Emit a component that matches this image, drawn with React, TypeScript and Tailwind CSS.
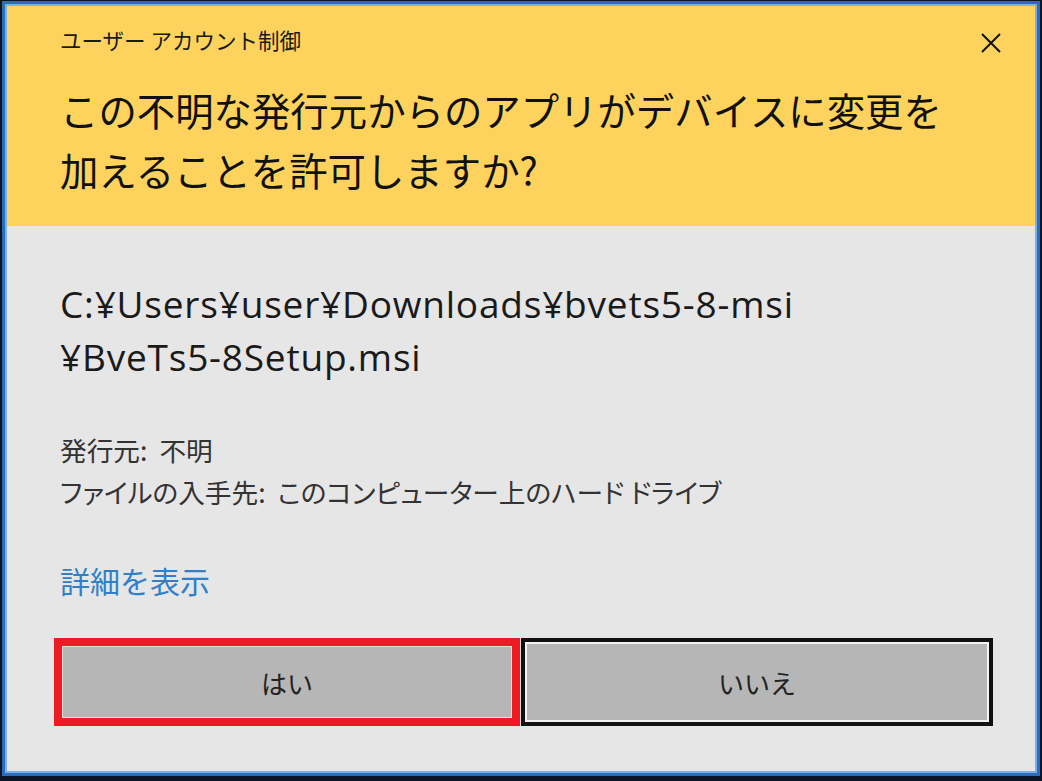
import React from "react";

const jp = "font-['Noto_Sans_CJK_JP','Noto_Sans',sans-serif]";

export default function App() {
  return (
    <div className="w-[1042px] h-[781px] bg-[#0a1528] pt-[1px] pl-[2px] pr-[2px] pb-[5px]">
      <div className="h-full w-full border-[3px] border-[#2a6dbd]">
        <div className="h-full w-full border-[2px] border-[#79b0e6] bg-[#e6e6e6] flex flex-col">
          {/* header */}
          <div className={`relative bg-[#fdd35d] h-[220px] pl-[53px] pt-[19px] ${jp}`}>
            <div className="text-[21.5px] leading-[30px] text-[#1a1a1a]">ユーザー アカウント制御</div>
            <div className="mt-[24px] text-[38.4px] leading-[60px] text-[#111]">
              <div>この不明な発行元からのアプリがデバイスに変更を</div>
              <div>加えることを許可しますか?</div>
            </div>
            <div className="absolute right-[33px] top-[26px] w-[22px] h-[22px]">
              <svg viewBox="0 0 22 22" width="22" height="22">
                <path d="M2 2 L20 20 M20 2 L2 20" stroke="#111" strokeWidth="2" fill="none" />
              </svg>
            </div>
          </div>
          {/* body */}
          <div className="pl-[53px] pt-[51px] flex-1 flex flex-col">
            <div className="font-['Open_Sans','Noto_Sans_CJK_JP',sans-serif] text-[37px] tracking-[0.8px] leading-[53px] text-[#1a1a1a]">
              <div>C:¥Users¥user¥Downloads¥bvets5-8-msi</div>
              <div>¥BveTs5-8Setup.msi</div>
            </div>
            <div className={`mt-[46px] text-[26.7px] leading-[42px] text-[#333] [font-feature-settings:'palt'] ${jp}`}>
              <div>発行元:&nbsp; 不明</div>
              <div>ファイルの入手先:&nbsp; このコンピューター上のハード ドライブ</div>
            </div>
            <div className={`mt-[47px] text-[30px] leading-[40px] text-[#2f80c9] ${jp}`}>詳細を表示</div>
          </div>
          <div className={`flex pl-[47px] pb-[45px] gap-[1px] ${jp}`}>
            <div className="w-[466px] h-[88px] border-[8px] border-[#ed1c24] bg-[#b6b6b6] shadow-[inset_0_0_0_1px_#dedede] flex items-center justify-center text-[26px] text-[#222]">
              はい
            </div>
            <div className="w-[472px] h-[88px] border-[4px] border-[#111] bg-[#b6b6b6] shadow-[inset_0_0_0_2px_#f2f2f2] flex items-center justify-center text-[26px] text-[#222]">
              いいえ
            </div>
          </div>
        </div>
      </div>
    </div>
  );
}
